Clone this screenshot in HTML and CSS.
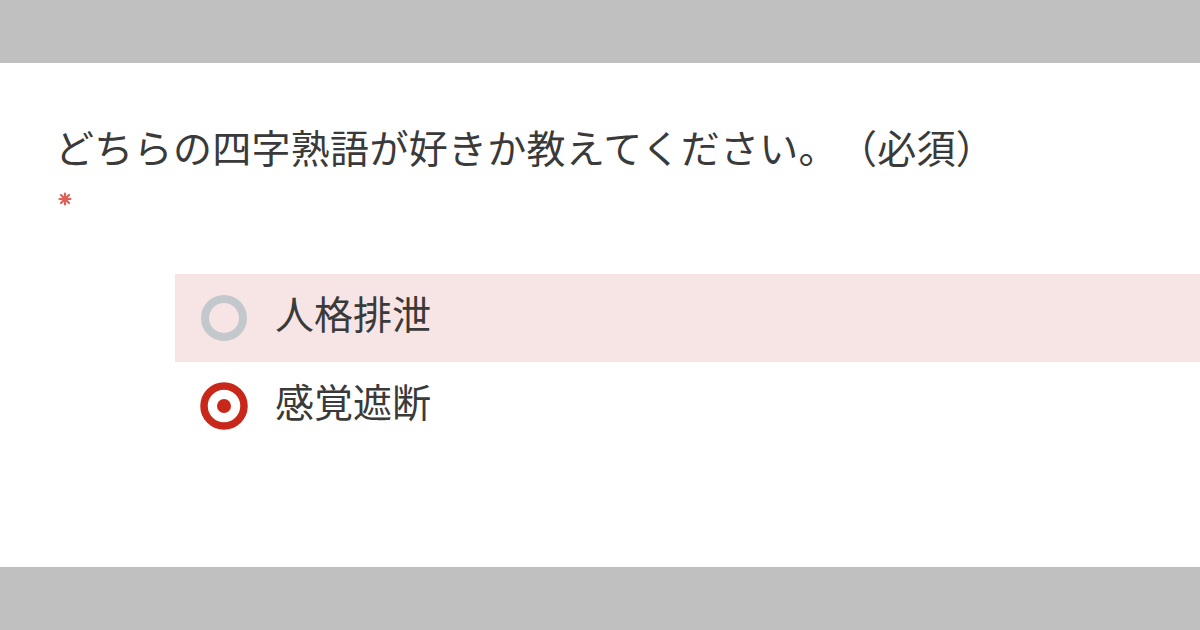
FILE: index.html
```html
<!DOCTYPE html>
<html lang="ja">
<head>
<meta charset="utf-8">
<link rel="stylesheet" href="styles.css">
</head>
<body>
<div class="bar"></div>
<main class="main">
  <div class="question">どちらの四字熟語が好きか教えてください。（必須）</div>
  <div class="required"><svg class="star" width="14" height="14" viewBox="0 0 14 14" aria-label="*"><g stroke="#d9473a" stroke-width="2.2" stroke-linecap="round"><line x1="7" y1="1.5" x2="7" y2="12.5"/><line x1="1.5" y1="7" x2="12.5" y2="7"/><line x1="3" y1="3" x2="11" y2="11"/><line x1="11" y1="3" x2="3" y2="11"/></g><circle cx="7" cy="7" r="3" fill="#d9473a"/></svg></div>
  <div class="options">
    <div class="option option-hover">
      <svg class="radio" width="48" height="48" viewBox="0 0 48 48"><circle cx="24" cy="24" r="19" fill="none" stroke="#c2c8cc" stroke-width="8"/></svg>
      <span class="label">人格排泄</span>
    </div>
    <div class="option">
      <svg class="radio" width="48" height="48" viewBox="0 0 48 48"><circle cx="24" cy="24" r="20" fill="none" stroke="#c8281a" stroke-width="7.5"/><circle cx="24" cy="24" r="7" fill="#c8281a"/></svg>
      <span class="label">感覚遮断</span>
    </div>
  </div>
</main>
<div class="bar"></div>
</body>
</html>
```
FILE: styles.css
```css
html, body {
  margin: 0;
  padding: 0;
  background: #ffffff;
}
body {
  width: 1200px;
  height: 630px;
  overflow: hidden;
  display: flex;
  flex-direction: column;
  font-family: "Noto Sans CJK JP", "Noto Sans", sans-serif;
  color: #3a3a3a;
}
.bar {
  height: 63px;
  background: #c0c0c0;
  flex: none;
}
.main {
  height: 504px;
  flex: none;
  padding: 59px 0 0 55px;
  box-sizing: border-box;
}
.question {
  font-size: 39px;
  line-height: 48px;
  letter-spacing: 0.3px;
  text-spacing-trim: space-all;
}
.required {
  height: 58px;
  display: flex;
  align-items: center;
  padding-left: 3px;
}
.star {
  opacity: 0.85;
}
.options {
  margin: 46px 0 0 120px;
}
.option {
  height: 88px;
  display: flex;
  align-items: center;
  gap: 27px;
  padding-left: 25px;
}
.option-hover {
  background: #f7e4e4;
}
.radio {
  flex: none;
}
.label {
  font-size: 39px;
  line-height: 48px;
  padding-bottom: 12px;
}
```
